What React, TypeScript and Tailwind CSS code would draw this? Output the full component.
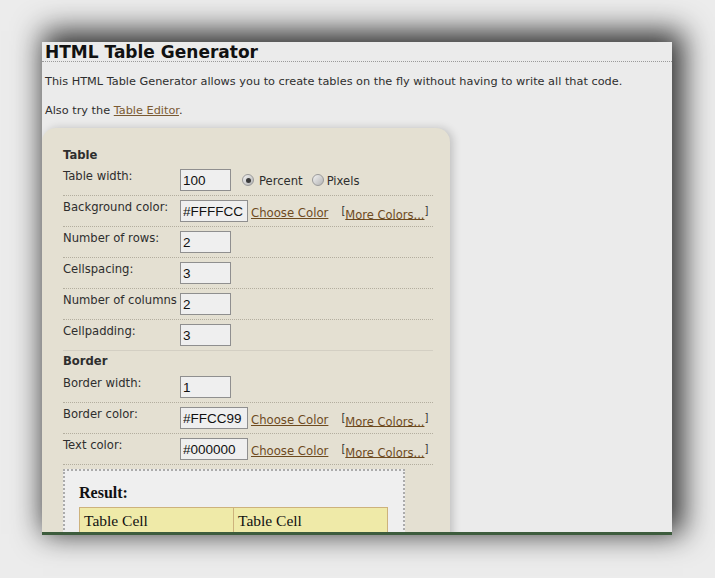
import type { ReactNode } from 'react';

const verdana = "font-['DejaVu_Sans',Verdana,sans-serif]";
const arial = "font-['Liberation_Sans',Arial,sans-serif]";
const times = "font-['Liberation_Serif','Times_New_Roman',serif]";

function Field({ value, wide }: { value: string; wide?: boolean }) {
  return (
    <input
      readOnly
      value={value}
      className={`${wide ? 'w-[68px]' : 'w-[51px]'} h-[22px] shrink-0 border border-[#8f8f8f] bg-[#efefef] pl-[2px] text-[13.5px] text-[#111] outline-none ${arial}`}
    />
  );
}

function Radio({ checked }: { checked?: boolean }) {
  return (
    <span className="w-[12px] h-[12px] rounded-full border border-[#9a9a9a] bg-gradient-to-br from-[#f2f2f2] to-[#b4b4b4] flex items-center justify-center">
      {checked && <span className="w-[5px] h-[5px] rounded-full bg-[#3a3a3a]" />}
    </span>
  );
}

function ColorLinks() {
  return (
    <>
      <a className="ml-[3px] mt-[3px] text-[11.7px] leading-[16px] text-[#6e4b1f] underline cursor-pointer">Choose Color</a>
      <span className="ml-[13px] mt-[3px] text-[11.5px] leading-[16px] text-[#333]">
        <span className="align-super text-[10px]">[</span>
        <a className="text-[#6e4b1f] underline cursor-pointer">More Colors...</a>
        <span className="align-super text-[10px]">]</span>
      </span>
    </>
  );
}

function Row({ label, children, solid }: { label: string; children: ReactNode; solid?: boolean }) {
  return (
    <div
      className={`flex items-start h-[31px] pt-[4px] pb-[4px] border-b ${
        solid ? 'border-solid border-[#d3cfc3]' : 'border-dotted border-[#b3ae9f]'
      }`}
    >
      <div className="w-[117px] shrink-0 mt-[1px] text-[11.6px] leading-[13px] text-[#2e2e2e]">{label}</div>
      <div className="flex items-center h-[22px]">{children}</div>
    </div>
  );
}

export default function App() {
  return (
    <div className="w-[715px] h-[578px] bg-[#ececec] pt-[42px] pl-[42px] overflow-hidden">
      <div
        className={`w-[630px] h-[493px] bg-[#ebebeb] border-b-[3px] border-[#3d5c3d] overflow-hidden shadow-[6px_-6px_28px_5px_rgba(0,0,0,0.8)] ${verdana}`}
      >
        <h1 className="pl-[3px] pt-[1px] text-[17px] leading-[18px] font-bold text-[#111] border-b border-dotted border-[#9a9a9a]">
          HTML Table Generator
        </h1>
        <p className="mt-[13px] pl-[3px] text-[11.3px] leading-[13px] text-[#2e2e2e]">
          This HTML Table Generator allows you to create tables on the fly without having to write all that code.
        </p>
        <p className="mt-[16px] pl-[3px] text-[11.3px] leading-[13px] text-[#2e2e2e]">
          Also try the <a className="text-[#7a5a33] underline cursor-pointer">Table Editor</a>.
        </p>

        <div className="mt-[11px] w-[408px] h-[420px] rounded-t-[14px] bg-[#e4e0d2] pt-[21px] pl-[21px] pr-[17px] shadow-[3px_0_9px_rgba(0,0,0,0.18)]">
          <h2 className="text-[11.6px] leading-[13px] font-bold text-[#2e2e2e] mb-[3px]">Table</h2>
          <Row label="Table width:">
            <Field value="100" />
            <span className="ml-[11px]">
              <Radio checked />
            </span>
            <span className="ml-[5px] mt-[3px] text-[11.6px] text-[#2e2e2e]">Percent</span>
            <span className="ml-[9px]">
              <Radio />
            </span>
            <span className="ml-[3px] mt-[3px] text-[11.6px] text-[#2e2e2e]">Pixels</span>
          </Row>
          <Row label="Background color:">
            <Field value="#FFFFCC" wide />
            <ColorLinks />
          </Row>
          <Row label="Number of rows:">
            <Field value="2" />
          </Row>
          <Row label="Cellspacing:">
            <Field value="3" />
          </Row>
          <Row label="Number of columns">
            <Field value="2" />
          </Row>
          <Row label="Cellpadding:" solid>
            <Field value="3" />
          </Row>

          <h2 className="mt-[4px] mb-[4px] text-[11.6px] leading-[13px] font-bold text-[#2e2e2e]">Border</h2>
          <Row label="Border width:">
            <Field value="1" />
          </Row>
          <Row label="Border color:">
            <Field value="#FFCC99" wide />
            <ColorLinks />
          </Row>
          <Row label="Text color:">
            <Field value="#000000" wide />
            <ColorLinks />
          </Row>

          <div className="mt-[4px] w-[342px] h-[120px] border-2 border-dotted border-[#ababab] bg-[#efefef] pt-[13px] pl-[14px]">
            <h3 className={`text-[16px] leading-[18px] font-bold text-[#111] mb-[5px] ${times}`}>Result:</h3>
            <table className={`w-[309px] border-collapse border border-[#cdb27c] ${times}`}>
              <tbody>
                <tr>
                  <td className="w-1/2 border border-[#cdb27c] bg-[#efeaa8] px-[4px] py-[4px] text-[15.5px] leading-[18px] text-[#111]">
                    Table Cell
                  </td>
                  <td className="w-1/2 border border-[#cdb27c] bg-[#efeaa8] px-[4px] py-[4px] text-[15.5px] leading-[18px] text-[#111]">
                    Table Cell
                  </td>
                </tr>
              </tbody>
            </table>
          </div>
        </div>
      </div>
    </div>
  );
}
